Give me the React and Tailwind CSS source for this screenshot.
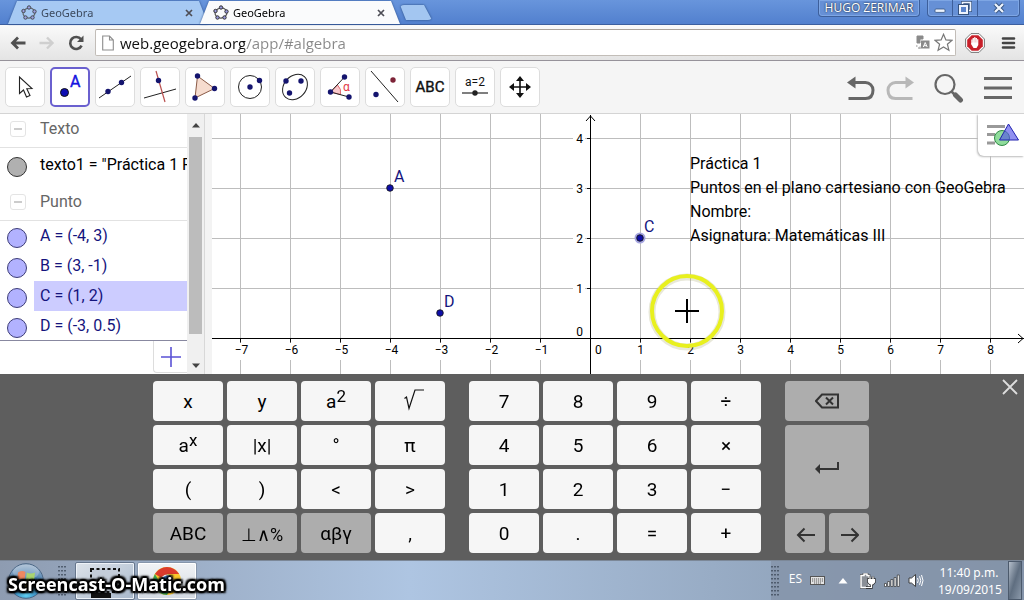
import React from "react";

const INK = "#14147d";

function GeoLogo({ dim }) {
  const pts = [[8, 2.5], [13.5, 6.5], [11.5, 12.5], [4.5, 12.5], [2.5, 6]];
  return (
    <svg className="size-4 shrink-0" viewBox="0 0 16 16" aria-hidden="true" opacity={dim ? 0.85 : 1}>
      <ellipse cx="8" cy="8" rx="6" ry="5" fill="none" stroke="#555" strokeWidth="1.2" transform="rotate(-12 8 8)" />
      {pts.map(([x, y]) => (
        <circle key={x + "-" + y} cx={x} cy={y} r="1.7" fill="#9a9adf" stroke="#333" strokeWidth="1" />
      ))}
    </svg>
  );
}

function CrossIcon() {
  return (
    <svg className="size-2" viewBox="0 0 8 8" aria-hidden="true">
      <path d="M1 1l6 6M7 1l-6 6" stroke="#4d4d55" strokeWidth="1.7" />
    </svg>
  );
}

function Tab({ active }) {
  return (
    <div className={active ? "relative z-10 -ml-2 drop-shadow-[0_0_1px_#2b4f8c]" : "drop-shadow-[0_0_1px_#2b4f8c]"}>
      <div
        className={
          "flex h-[23px] w-[200px] items-center pl-[13px] pr-[13px] [clip-path:polygon(9px_0,calc(100%-9px)_0,100%_100%,0_100%)] " +
          (active ? "bg-[#fafbfc]" : "bg-[#a6c9f3]")
        }
      >
        <GeoLogo dim={!active} />
        <a href="#algebra" className={"ml-1 flex-1 text-[11px] leading-4 " + (active ? "text-black" : "text-[#3c4a5e]")}>
          GeoGebra
        </a>
        <button aria-label="Cerrar pestaña" className="p-0.5"><CrossIcon /></button>
      </div>
    </div>
  );
}

function TabStrip() {
  return (
    <header className="flex h-[25px] justify-between border-b border-[#3c5f9f] bg-linear-to-b from-[#6895dc] to-[#5280ce] pl-2">
      <div className="flex items-end">
        <Tab />
        <Tab active />
        <button aria-label="Nueva pestaña" className="mb-1 h-[15px] w-8 self-end drop-shadow-[0_0_1px_#24497f]">
          <span className="block size-full rounded-sm bg-[#a3c6f1] [clip-path:polygon(0_0,24px_0,100%_100%,6px_100%)]" />
        </button>
      </div>
      <div className="flex items-start pr-1">
        <button className="mr-[7px] h-[17px] w-[102px] rounded-b border border-t-0 border-[#3d5f9b] bg-[#6690d6] font-['Open_Sans',sans-serif] text-[12px] leading-4 text-white shadow-[inset_0_0_0_1px_#7ea6e4] [text-shadow:0_0_2px_#000]">
          HUGO ZERIMAR
        </button>
        <div className="flex h-[17px] rounded-b border border-t-0 border-[#3d5f9b] bg-[#6690d6] shadow-[inset_0_0_0_1px_#7ea6e4]">
          <button aria-label="Minimizar" className="flex w-[25px] items-center justify-center border-r border-[#3d5f9b]">
            <svg className="size-3" viewBox="0 0 12 12"><rect x="1" y="7" width="10" height="3.4" rx="1" fill="#eef4fd" stroke="#34527f" strokeWidth=".8" /></svg>
          </button>
          <button aria-label="Restaurar" className="flex w-[25px] items-center justify-center border-r border-[#3d5f9b]">
            <svg className="size-[14px]" viewBox="0 0 14 14">
              <path d="M4.5 1.5h8v8h-8z" fill="none" stroke="#34527f" strokeWidth="3" />
              <path d="M4.5 1.5h8v8h-8z" fill="none" stroke="#eef4fd" strokeWidth="1.6" />
              <rect x="1.5" y="4.5" width="8" height="8" fill="#34527f" stroke="#34527f" strokeWidth="3" />
              <rect x="2" y="5" width="7" height="7" fill="#5a84cc" stroke="#eef4fd" strokeWidth="2" />
            </svg>
          </button>
          <button aria-label="Cerrar" className="flex w-[41px] items-center justify-center">
            <svg className="size-3" viewBox="0 0 12 12">
              <path d="M2 2l8 8M10 2l-8 8" stroke="#34527f" strokeWidth="4" />
              <path d="M2 2l8 8M10 2l-8 8" stroke="#eef4fd" strokeWidth="2.3" />
            </svg>
          </button>
        </div>
      </div>
    </header>
  );
}

function AddressBar() {
  return (
    <div className="flex h-9 items-center border-b border-[#96929a] bg-linear-to-b from-[#fafafa] to-[#e4e4e4] pl-2 pr-2">
      <button aria-label="Atrás" className="flex w-[19px] justify-center">
        <svg className="h-4 w-4" viewBox="0 0 16 16"><path d="M15.500 8H3M8 2.500L2.500 8L8 13.500" fill="none" stroke="#505050" strokeWidth="2.8" /></svg>
      </button>
      <button aria-label="Adelante" className="ml-[10px] flex w-[19px] justify-center">
        <svg className="h-4 w-4" viewBox="0 0 16 16"><path d="M.5 8H13M8 2.500L13.500 8L8 13.500" fill="none" stroke="#cfcfcf" strokeWidth="2.4" /></svg>
      </button>
      <button aria-label="Recargar" className="ml-[10px] flex w-[19px] justify-center">
        <svg className="h-4 w-4" viewBox="0 0 16 16">
          <path d="M13 4.300A6 6 0 1 0 13.600 10.600" fill="none" stroke="#505050" strokeWidth="2.6" />
          <path d="M15.500 .5V7H9z" fill="#505050" />
        </svg>
      </button>
      <div className="ml-[10px] flex h-[27px] flex-1 items-center rounded-xs border border-[#c2bdb8] border-t-[#aaa39c] bg-white pl-[6px] pr-0.5">
        <svg className="h-4 w-3 shrink-0" viewBox="0 0 12 16" aria-hidden="true">
          <path d="M.7 1H7.500L11.300 5V15H.7zM7.500 1V5H11.300" fill="#fff" stroke="#8d8d8d" strokeWidth="1.100" />
        </svg>
        <input
          aria-label="Dirección"
          defaultValue="web.geogebra.org/app/#algebra"
          className="ml-1.5 min-w-0 flex-1 bg-[linear-gradient(90deg,#111_125px,#888_125px)] bg-clip-text font-['Open_Sans',sans-serif] text-[15px] leading-6 text-transparent outline-none"
        />
        <button aria-label="Traducir">
          <svg className="h-[15px] w-[15px]" viewBox="0 0 15 15">
            <path d="M2 1H8V4H5V8H2zM1 11H2.500M3 13H4.500M5 11.500V14" stroke="#8a8a8a" fill="#8a8a8a" />
            <rect x="6" y="5.500" width="8.500" height="8" fill="#8a8a8a" />
            <path d="M8.300 12L10.200 7.500L12.200 12M9 10.700H11.500" stroke="#fff" fill="none" />
          </svg>
        </button>
        <button aria-label="Marcador" className="ml-1">
          <svg className="h-[19px] w-[19px]" viewBox="0 0 19 19">
            <path d="M9.500 1.300L11.900 6.900L18 7.300L13.400 11.200L14.900 17.200L9.500 14L4.100 17.200L5.600 11.200L1 7.300L7.100 6.900z" fill="#fff" stroke="#777" strokeWidth="1.200" />
          </svg>
        </button>
      </div>
      <button aria-label="Bloqueador" className="ml-[9px]">
        <svg className="h-5 w-5" viewBox="0 0 20 20">
          <path d="M6 .6H14L19.400 6V14L14 19.400H6L.6 14V6z" fill="#fff" stroke="#777" strokeWidth="1" />
          <path d="M6.700 2.200H13.300L17.800 6.700V13.300L13.300 17.800H6.700L2.200 13.300V6.700z" fill="#c8202a" />
          <path d="M6.300 9.500V6.500H7.600V5H9V4.200H10.500V5H12V6.300H13.300V12L11.500 15H8.500L6 11z" fill="#fff" />
          <path d="M7.700 6.500V9.500M9.200 5V9.500M10.600 5V9.500M12 6V9.500" stroke="#dd8a8f" strokeWidth=".4" />
        </svg>
      </button>
      <button aria-label="Menú del navegador" className="ml-4">
        <svg className="h-4 w-[15px]" viewBox="0 0 15 16">
          <path d="M2 3.500H13M2 8H13M2 12.500H13" stroke="#444" strokeWidth="2.600" strokeLinecap="round" />
        </svg>
      </button>
    </div>
  );
}

/* Drawing-tool glyphs, each on a 40 by 40 grid. */
const dot = (x, y, fill = "#14146e", r = 2.700) => <circle cx={x} cy={y} r={r} fill={fill} />;
const TOOLS = [
  ["Elige y mueve", <path d="M14.500 10V26.500L18.500 23L21.500 30L25 28.500L21.800 21.800L27 21.500z" fill="#fff" stroke="#222" strokeWidth="1.100" />],
  ["Punto", <>
    <circle cx="14.500" cy="25.500" r="4" fill="#0e0eb4" stroke="#111" strokeWidth="1" />
    <text x="20" y="20" className="text-[16px]" fill="#1414e0" stroke="#1414e0" strokeWidth=".4">A</text>
  </>],
  ["Recta", <><path d="M4 31L36 9" stroke="#222" />{dot(13, 24.500)}{dot(26.500, 15.500)}</>],
  ["Perpendicular", <><path d="M4 31L36 22" stroke="#222" /><path d="M16 4L25 35" stroke="#b9504f" strokeWidth="1.200" />{dot(18.500, 13.500)}</>],
  ["Polígono", <><path d="M12.500 9L10 31L29.500 21.500z" fill="#f6dccf" stroke="#8a5a46" />{dot(12.500, 9)}{dot(10, 31)}{dot(29.500, 21.500)}</>],
  ["Circunferencia", <><circle cx="20" cy="20" r="11.500" fill="none" stroke="#222" />{dot(20, 20)}{dot(29.500, 13.500)}</>],
  ["Elipse", <><ellipse cx="20" cy="20" rx="14" ry="11" fill="none" stroke="#222" transform="rotate(-48 20 20)" />{dot(11, 14)}{dot(26, 14)}{dot(14.500, 26)}</>],
  ["Ángulo", <>
    <path d="M10.500 25L17.500 18A10 10 0 0 1 20.500 27.500z" fill="#f9c9cc" stroke="#e06a72" />
    <path d="M24.500 10L10.500 25L29 30" fill="none" stroke="#222" />
    <text x="23" y="24" className="text-[12px]" fill="#e23a45">α</text>
    {dot(24.500, 10)}{dot(10.500, 25)}{dot(29, 30)}
  </>],
  ["Simetría", <><path d="M6 4L33 35" stroke="#222" />{dot(28, 13, "#7d2338")}{dot(11, 27.500)}</>],
  ["Texto", <text x="20" y="25" textAnchor="middle" className="text-[15px]" stroke="#111" strokeWidth=".4" fill="#111">ABC</text>],
  ["Deslizador", <>
    <text x="20" y="19" textAnchor="middle" className="text-[12px]" fill="#111">a=2</text>
    <path d="M7 26H33" stroke="#555" strokeWidth="1.500" />{dot(20, 26, "#222")}
  </>],
  ["Desplaza vista", <>
    <path d="M20 12V28M12 20H28" stroke="#111" strokeWidth="1.600" />
    <path d="M20 9L24 14H16zM20 31L24 26H16zM9 20L14 16V24zM31 20L26 16V24z" fill="#111" />
  </>],
];

function ToolBar() {
  return (
    <nav className="flex h-[53px] items-center justify-between border-b border-[#d4d4d4] bg-[#f5f5f5] pl-[5px] pr-3">
      <div className="flex gap-[5px]">
        {TOOLS.map(([name, glyph]) => (
          <button
            key={name}
            aria-label={name}
            className={
              "flex size-10 items-center justify-center rounded-[5px] bg-white " +
              (name === "Punto" ? "border-2 border-[#6a60cf]" : "border border-[#dddddd]")
            }
          >
            <svg className="size-10 shrink-0" viewBox="0 0 40 40" aria-hidden="true">{glyph}</svg>
          </button>
        ))}
      </div>
      <div className="flex items-center">
        <button aria-label="Deshacer">
          <svg className="h-8 w-7" viewBox="0 0 28 32">
            <path d="M7 11.500H18.500A7.500 7.500 0 0 1 26 19C26 25 23 27.500 18.500 27.500H1.500" fill="none" stroke="#666" strokeWidth="3" />
            <path d="M0 11.500L8.500 5.500V17.500z" fill="#666" />
          </svg>
        </button>
        <button aria-label="Rehacer" className="ml-[11px]">
          <svg className="h-8 w-7" viewBox="0 0 28 32">
            <path d="M21 11.500H9.500A7.500 7.500 0 0 0 2 19C2 25 5 27.500 9.500 27.500H26.500" fill="none" stroke="#b8b8b8" strokeWidth="3" />
            <path d="M28 11.500L19.500 5.500V17.500z" fill="#b8b8b8" />
          </svg>
        </button>
        <button aria-label="Buscar" className="ml-5">
          <svg className="h-8 w-[30px]" viewBox="0 0 30 32">
            <circle cx="11" cy="13.500" r="9.500" fill="none" stroke="#666" strokeWidth="2.200" />
            <path d="M17.500 20.500L21 24" stroke="#666" strokeWidth="2.500" />
            <path d="M21.500 24L26.500 29" stroke="#666" strokeWidth="5" strokeLinecap="round" />
          </svg>
        </button>
        <button aria-label="Menú" className="ml-5">
          <svg className="h-8 w-7" viewBox="0 0 28 32"><path d="M0 7.500H28M0 17H28M0 26.500H28" stroke="#666" strokeWidth="3" /></svg>
        </button>
      </div>
    </nav>
  );
}

function GroupHeader({ children, className }) {
  return (
    <div className={"flex shrink-0 items-center border-b border-[#e2e2e2] pl-[10px] " + className}>
      <button aria-label={"Contraer " + children} className="flex size-4 items-center justify-center rounded-[3px] border border-[#e4e4e4]">
        <span className="h-0.5 w-2 bg-[#cccccc]" />
      </button>
      <h2 className="ml-[14px] text-[16px] leading-5 text-[#666666]">{children}</h2>
    </div>
  );
}

function Marble({ name, gray }) {
  return (
    <button
      aria-label={"Mostrar " + name}
      className={"mt-1 size-5 shrink-0 rounded-full border " + (gray ? "border-[#333333] bg-[#b0b0b0]" : "border-[#3c3c78] bg-[#b2b2ff]")}
    />
  );
}

const POINTS = [["A", "A = (-4, 3)"], ["B", "B = (3, -1)"], ["C", "C = (1, 2)"], ["D", "D = (-3, 0.5)"]];

function AlgebraView() {
  return (
    <aside className="flex">
      <div className="flex w-[187px] flex-col bg-white">
        <div className="flex h-[226px] flex-col overflow-hidden text-[16px] leading-5">
          <GroupHeader className="h-[34px] pb-1">Texto</GroupHeader>
          <div className="flex h-[33px] shrink-0 items-center overflow-hidden pl-[7px]">
            <Marble name="texto1" gray />
            <span className="ml-[13px] whitespace-nowrap text-black">texto1 = "Práctica 1 P</span>
          </div>
          <GroupHeader className="h-10 pt-0.5">Punto</GroupHeader>
          <ul>
            {POINTS.map(([name, label]) => (
              <li key={name} className="flex h-[30px] items-center pl-[7px]">
                <Marble name={name} />
                <span className={"ml-[7px] flex h-full flex-1 items-center pl-[6px] text-[#14147d] " + (name === "C" ? "bg-[#ccccff]" : "")}>
                  {label}
                </span>
              </li>
            ))}
          </ul>
        </div>
        <div className="flex flex-1 border-t border-[#8888a0]">
          <input aria-label="Entrada" autoFocus className="h-5 min-w-0 flex-1 self-end border-0 pl-[10px] outline-none" />
          <button aria-label="Añadir" className="mb-px flex w-[34px] items-center justify-center rounded-bl border-b border-l border-[#dddddd]">
            <svg className="size-5" viewBox="0 0 20 20"><path d="M10 0V20M0 10H20" stroke="#5a52d5" strokeWidth="1.600" /></svg>
          </button>
        </div>
      </div>
      <div className="flex w-[17px] flex-col items-center bg-[#f0f0f0]">
        <svg className="my-2 h-[7px] w-2" viewBox="0 0 8 7"><path d="M4 1L8 5.500H0z" fill="#444" /></svg>
        <div className="h-[197px] w-[13px] bg-[#bcbcbc]" />
        <svg className="mb-[5px] mt-auto h-[7px] w-2" viewBox="0 0 8 7"><path d="M4 6L8 1.500H0z" fill="#444" /></svg>
      </div>
      <div className="w-2 border-l border-[#d8d8d8] bg-[#f3f3f3]" />
    </aside>
  );
}

/* Graph origin and pixels per unit. */
const OX = 378.5;
const OY = 224.5;
const UNIT = 50;
const XS = [-7, -6, -5, -4, -3, -2, -1, 1, 2, 3, 4, 5, 6, 7, 8];
const YS = [1, 2, 3, 4];
const NOTE = ["Práctica 1", "Puntos en el plano cartesiano con GeoGebra", "Nombre:", "Asignatura: Matemáticas III"];
const PLOTTED = [["A", -4, 3], ["C", 1, 2], ["D", -3, 0.5]];

function Graphics() {
  return (
    <main className="relative min-w-0 flex-1 bg-white">
      <svg className="block h-[260px] w-full" role="img" aria-label="Vista gráfica">
        {XS.map((x) => (
          <g key={x}>
            <path d={`M${OX + x * UNIT} 0V260`} stroke="#bdbdbd" />
            <path d={`M${OX + x * UNIT} ${OY}v4`} stroke="#111" />
          </g>
        ))}
        {YS.map((y) => (
          <line key={y} x1="0" x2="100%" y1={OY - y * UNIT} y2={OY - y * UNIT} stroke="#bdbdbd" />
        ))}
        <line x1="0" x2="100%" y1={OY} y2={OY} stroke="#000" />
        <path d={`M${OX} 1V260M374 7L378.500 2L383 7`} stroke="#000" fill="none" />
        <svg x="100%" y="219" width="10" height="12" overflow="visible">
          <path d="M-6 1L-1 5.500L-6 10" stroke="#000" fill="none" />
        </svg>
        {XS.map((x) => (
          <g key={x}>
            <rect x={OX + x * UNIT - 10} y="229" width="20" height="17" fill="#fff" />
            <text x={OX + x * UNIT + (x < 0 ? 1 : 0)} y="240" textAnchor="middle" className="text-[12px]">
              {x < 0 ? "−" + -x : x}
            </text>
          </g>
        ))}
        {YS.map((y) => (
          <g key={y}>
            <rect x="361" y={OY - y * UNIT - 6} width="12" height="12" fill="#fff" />
            <path d={`M375 ${OY - y * UNIT}h3`} stroke="#111" />
            <text x="371" y={OY - y * UNIT + 4.500} textAnchor="end" className="text-[12px]">{y}</text>
          </g>
        ))}
        <text x="371" y="222" textAnchor="end" className="text-[12px]">0</text>
        <text x="383" y="240" className="text-[12px]">0</text>
        {NOTE.map((line, i) => (
          <text key={line} x="478" y={55 + i * 24} className="text-[16px]">{line}</text>
        ))}
        <circle cx={OX + 49.5} cy={OY - 100.5} r="5.500" fill="#a5a5e0" />
        {PLOTTED.map(([name, x, y]) => (
          <g key={name}>
            <circle cx={OX + x * UNIT - 0.5} cy={OY - y * UNIT - 0.5} r="3.300" fill="#0e0ea8" stroke="#111" strokeWidth=".8" />
            <text x={OX + x * UNIT + 3.5} y={OY - y * UNIT - 6.5} fill={INK} className="text-[16px]">{name}</text>
          </g>
        ))}
        <circle cx="475" cy="198" r="35" fill="none" stroke="#8a8a40" strokeOpacity=".2" strokeWidth="7" />
        <circle cx="475" cy="197" r="35" fill="none" stroke="#e8f01e" strokeWidth="4" />
        <path d="M463 197H487M475 185V209" stroke="#000" strokeWidth="2" />
      </svg>
      <button aria-label="Barra de estilo" className="absolute right-0 top-0 flex h-[42px] w-[46px] items-center justify-center rounded-bl-md bg-white pl-1 shadow-[-1px_1px_2px_#bbbbbb]">
        <svg className="h-6 w-8" viewBox="0 0 32 24">
          <path d="M0 3.500H18M0 11.500H8M0 20H8" stroke="#999" strokeWidth="3" />
          <circle cx="15" cy="15" r="7.500" fill="#8fdc9b" stroke="#2f8a45" />
          <path d="M21.500 1L31.500 17H12.500z" fill="#5555e8" fillOpacity=".65" stroke="#2222b0" />
        </svg>
      </button>
    </main>
  );
}

const FUNCTION_KEYS = [
  ["x", "x"], ["y", "y"],
  ["a2", <span>a<sup className="relative -top-1.5 align-baseline text-[17px] leading-none">2</sup></span>],
  ["raíz", <svg className="size-7" viewBox="0 0 28 28"><path d="M8.500 10.500L10.500 9L13 20.500L19 2H28" fill="none" stroke="#111" strokeWidth="1.200" /></svg>],
  ["ax", <span>a<sup className="relative -top-1.5 align-baseline text-[17px] leading-none">x</sup></span>],
  ["|x|", "|x|"], ["°", "°"], ["π", "π"],
  ["(", "("], [")", ")"], ["<", "<"], [">", ">"],
  ["ABC", "ABC", true], ["⊥∧%", "⊥∧%", true], ["αβγ", "αβγ", true], [",", ","],
];
const NUMBER_KEYS = ["7", "8", "9", "÷", "4", "5", "6", "×", "1", "2", "3", "−", "0", ".", "=", "+"].map((k) => [k, k]);

function Key({ label, children, gray, className = "" }) {
  return (
    <button
      aria-label={label}
      className={"flex items-center justify-center rounded-[4px] text-black " + (gray ? "bg-[#adadad] " : "bg-[#f6f6f6] ") + className}
    >
      {children}
    </button>
  );
}

function KeyBlock({ keys }) {
  return (
    <div className="grid auto-rows-[40px] grid-cols-[repeat(4,70px)] gap-1">
      {keys.map(([label, face, gray]) => (
        <Key key={label} label={label} gray={gray} className={label === "⊥∧%" ? "pt-0.5 text-[18px]" : "pt-0.5 text-[19px]"}>
          {face}
        </Key>
      ))}
    </div>
  );
}

function Keyboard() {
  return (
    <section className="relative flex justify-center gap-6 bg-[#5e5e5e] py-[7px] pr-0.5">
      <KeyBlock keys={FUNCTION_KEYS} />
      <KeyBlock keys={NUMBER_KEYS} />
      <div className="grid auto-rows-[40px] grid-cols-[repeat(2,40px)] gap-1">
        <Key label="Borrar" gray className="col-span-2">
          <svg className="h-4 w-6" viewBox="0 0 24 16">
            <path d="M7 1.500H23V14.500H7L1 8z" fill="none" stroke="#333" strokeWidth="2" />
            <path d="M11 4.500L18 11.500M18 4.500L11 11.500" stroke="#333" strokeWidth="2" />
          </svg>
        </Key>
        <Key label="Intro" gray className="col-span-2 row-span-2">
          <svg className="h-4 w-6" viewBox="0 0 24 16">
            <path d="M3 10H23V3" fill="none" stroke="#333" strokeWidth="2" />
            <path d="M0 10L5 5V15z" fill="#333" />
          </svg>
        </Key>
        <Key label="Izquierda" gray className="pt-1">
          <svg className="h-4 w-5" viewBox="0 0 20 16"><path d="M20 8H3M9.500 1.500L3 8L9.500 14.500" fill="none" stroke="#333" strokeWidth="2" /></svg>
        </Key>
        <Key label="Derecha" gray className="pt-1">
          <svg className="h-4 w-5" viewBox="0 0 20 16"><path d="M2 8H19M12.500 1.500L19 8L12.500 14.500" fill="none" stroke="#333" strokeWidth="2" /></svg>
        </Key>
      </div>
      <button aria-label="Cerrar teclado" className="absolute right-[6px] top-[5px]">
        <svg className="size-4" viewBox="0 0 16 16"><path d="M1 1L15 15M15 1L1 15" stroke="#dddddd" strokeWidth="1.800" /></svg>
      </button>
    </section>
  );
}

function Grip() {
  return (
    <svg className="h-[34px] w-2 shrink-0" viewBox="0 0 8 34" aria-hidden="true">
      <path d="M1 2V34M4 2V34M7 2V34" stroke="#3e4a5a" strokeWidth="1.500" strokeDasharray="1.500 2.500" />
    </svg>
  );
}

function TaskBar() {
  return (
    <footer className="relative flex h-10 items-stretch justify-between border-t border-[#7c8898] bg-linear-to-r from-[#8e9cb1] via-[#aec5e2] via-40% to-[#8293a8] text-white">
      <div className="flex items-center pl-2">
        <button aria-label="Inicio">
          <svg className="size-9" viewBox="0 0 36 36">
            <defs>
              <radialGradient id="orb" cx=".5" cy=".9" r=".9">
                <stop offset="0" stopColor="#5fd0f5" /><stop offset=".5" stopColor="#2a6ea8" /><stop offset="1" stopColor="#9fb4cc" />
              </radialGradient>
            </defs>
            <circle cx="18" cy="18" r="17.300" fill="url(#orb)" stroke="#4a6685" />
            <path d="M10 9.500Q14 7 17.500 9L16.500 17Q12.500 15.500 9 17.500z" fill="#e8602c" />
            <path d="M18.800 9.500Q22.500 11.500 27 9.500L26 17.500Q22 19.500 17.800 17.500z" fill="#8cc63f" />
            <path d="M8.800 19Q12.500 17 16.300 18.500L15.300 26Q11.500 24.500 7.800 26.500z" fill="#3f9be0" />
            <path d="M17.600 19Q21.500 21 25.800 19L24.800 26.500Q21 28.500 16.600 26.500z" fill="#fcc92c" />
            <ellipse cx="18" cy="9" rx="13" ry="7.500" fill="#fff" opacity=".25" />
          </svg>
        </button>
        <span className="ml-[14px]"><Grip /></span>
        <button aria-label="Grabador de pantalla" className="ml-[9px] flex h-[38px] w-[60px] justify-center rounded-xs border border-[#66768c] bg-linear-to-br from-[#dde3ea] to-[#a9b9cc] pt-1 shadow-[inset_0_0_0_1px_#eef3f9]">
          <svg className="h-8 w-8" viewBox="0 0 32 32">
            <rect x="2" y="2" width="28" height="23" fill="#c3ccd8" stroke="#111" strokeWidth="2" strokeDasharray="3 2.500" />
            <rect x="2" y="26" width="20" height="5" fill="#111" />
          </svg>
        </button>
        <button aria-label="Chrome" className="ml-0.5 flex h-[38px] w-[60px] justify-center rounded-xs border border-[#8595aa] bg-linear-to-b from-[#f1f3f5] to-[#d3dae3] pt-1 shadow-[inset_0_0_0_1px_#ffffff]">
          <svg className="h-7 w-7" viewBox="0 0 28 28">
            <circle cx="14" cy="14" r="14" fill="#fcc92c" />
            <path d="M14 14L1.900 7A14 14 0 0 1 26.100 7H14z" fill="#dc3b2c" />
            <path d="M1.900 7A14 14 0 0 0 14 28L20 17.500L8 17.500z" fill="#3aa757" />
            <circle cx="14" cy="14" r="6.500" fill="#fff" />
            <circle cx="14" cy="14" r="5.200" fill="#3f7fe0" />
          </svg>
        </button>
      </div>
      <div className="flex items-center bg-[#8494a9]/80 pr-0.5">
        <Grip />
        <span className="-mt-1 ml-[10px] text-[12px] leading-4">ES</span>
        <svg className="ml-2 h-[11px] w-4" viewBox="0 0 16 11" aria-hidden="true">
          <rect x=".5" y="1.500" width="14" height="8" fill="#e4e4e4" stroke="#555" />
          <path d="M2 4H13M2 6H13M4 8H11" stroke="#555" strokeDasharray="1.200 .8" />
        </svg>
        <svg className="ml-[12px] h-1.5 w-2.5" viewBox="0 0 10 6" aria-hidden="true"><path d="M5 0L9.500 5.500H.5z" fill="#fff" /></svg>
        <svg className="ml-[12px] h-4 w-4" viewBox="0 0 16 16" aria-hidden="true">
          <path d="M1 2.500H4V1H7V2.500H9V14.500H1z" fill="#8a8f96" stroke="#333" strokeWidth="2.600" />
          <path d="M1 2.500H4V1H7V2.500H9V14.500H1z" fill="#8a8f96" stroke="#fff" strokeWidth="1.500" />
          <path d="M8.500 6.500H14.500V9L12.800 11H10.200L8.500 9zM11.500 11V14.500H6M10 3.500V6.500M13 3.500V6.500" fill="#fff" stroke="#222" strokeWidth="2.400" />
          <path d="M8.500 6.500H14.500V9L12.800 11H10.200L8.500 9zM10 3.500V6.500M13 3.500V6.500" fill="#fff" stroke="#fff" strokeWidth="1.200" />
          <path d="M11.500 11V14.500H6" fill="none" stroke="#fff" strokeWidth="1.200" />
        </svg>
        <svg className="ml-2 h-[13px] w-4" viewBox="0 0 16 13" aria-hidden="true">
          <path d="M.5 9.500h2v3h-2zM3.700 7.500h2v5h-2zM6.900 5.500h2v7h-2zM10.100 3.500h2v9h-2zM13.300 1h2v11.500h-2z" fill="#fff" stroke="#333" strokeWidth=".7" />
        </svg>
        <svg className="ml-2 h-[15px] w-4" viewBox="0 0 16 15" aria-hidden="true">
          <path d="M1 5H3.500L7.500 1.500V13.500L3.500 10H1z" fill="#fff" stroke="#333" strokeWidth=".9" />
          <path d="M9.500 5Q11 7.500 9.500 10M11.500 3.200Q14 7.500 11.500 11.800M13.500 2Q16.500 7.500 13.500 13" fill="none" stroke="#fff" strokeWidth="1" />
        </svg>
        <time className="ml-[14px] flex w-[62px] flex-col text-center text-[12px] leading-[17px] font-['Segoe_UI','Noto_Sans',sans-serif]">
          <span>11:40 p.m.</span>
          <span>19/09/2015</span>
        </time>
        <button aria-label="Mostrar escritorio" className="ml-2 h-full w-[14px] border border-[#4c5a6c] bg-linear-to-br from-[#b5bfcb] via-[#5f6e80] to-[#8b99aa]" />
      </div>
      <p className="absolute left-2 top-[10px] whitespace-nowrap text-[18px] font-bold leading-[26px] text-white [text-shadow:-2px_0_1px_#000,2px_0_1px_#000,0_-2px_1px_#000,0_2px_1px_#000,-2px_-2px_2px_#000,2px_2px_2px_#000,-2px_2px_2px_#000,2px_-2px_2px_#000,0_0_4px_#000]">
        Screencast-O-Matic.com
      </p>
    </footer>
  );
}

export default function App() {
  return (
    <div className="flex min-h-screen flex-col overflow-hidden bg-[#5e5e5e]">
      <div className="font-['Noto_Sans','Open_Sans',sans-serif]">
        <TabStrip />
        <AddressBar />
      </div>
      <div className="flex flex-1 flex-col font-[Roboto,'Liberation_Sans',sans-serif]">
        <ToolBar />
        <div className="flex">
          <AlgebraView />
          <Graphics />
        </div>
        <Keyboard />
      </div>
      <div className="font-['Open_Sans','Noto_Sans',sans-serif]">
        <TaskBar />
      </div>
    </div>
  );
}
